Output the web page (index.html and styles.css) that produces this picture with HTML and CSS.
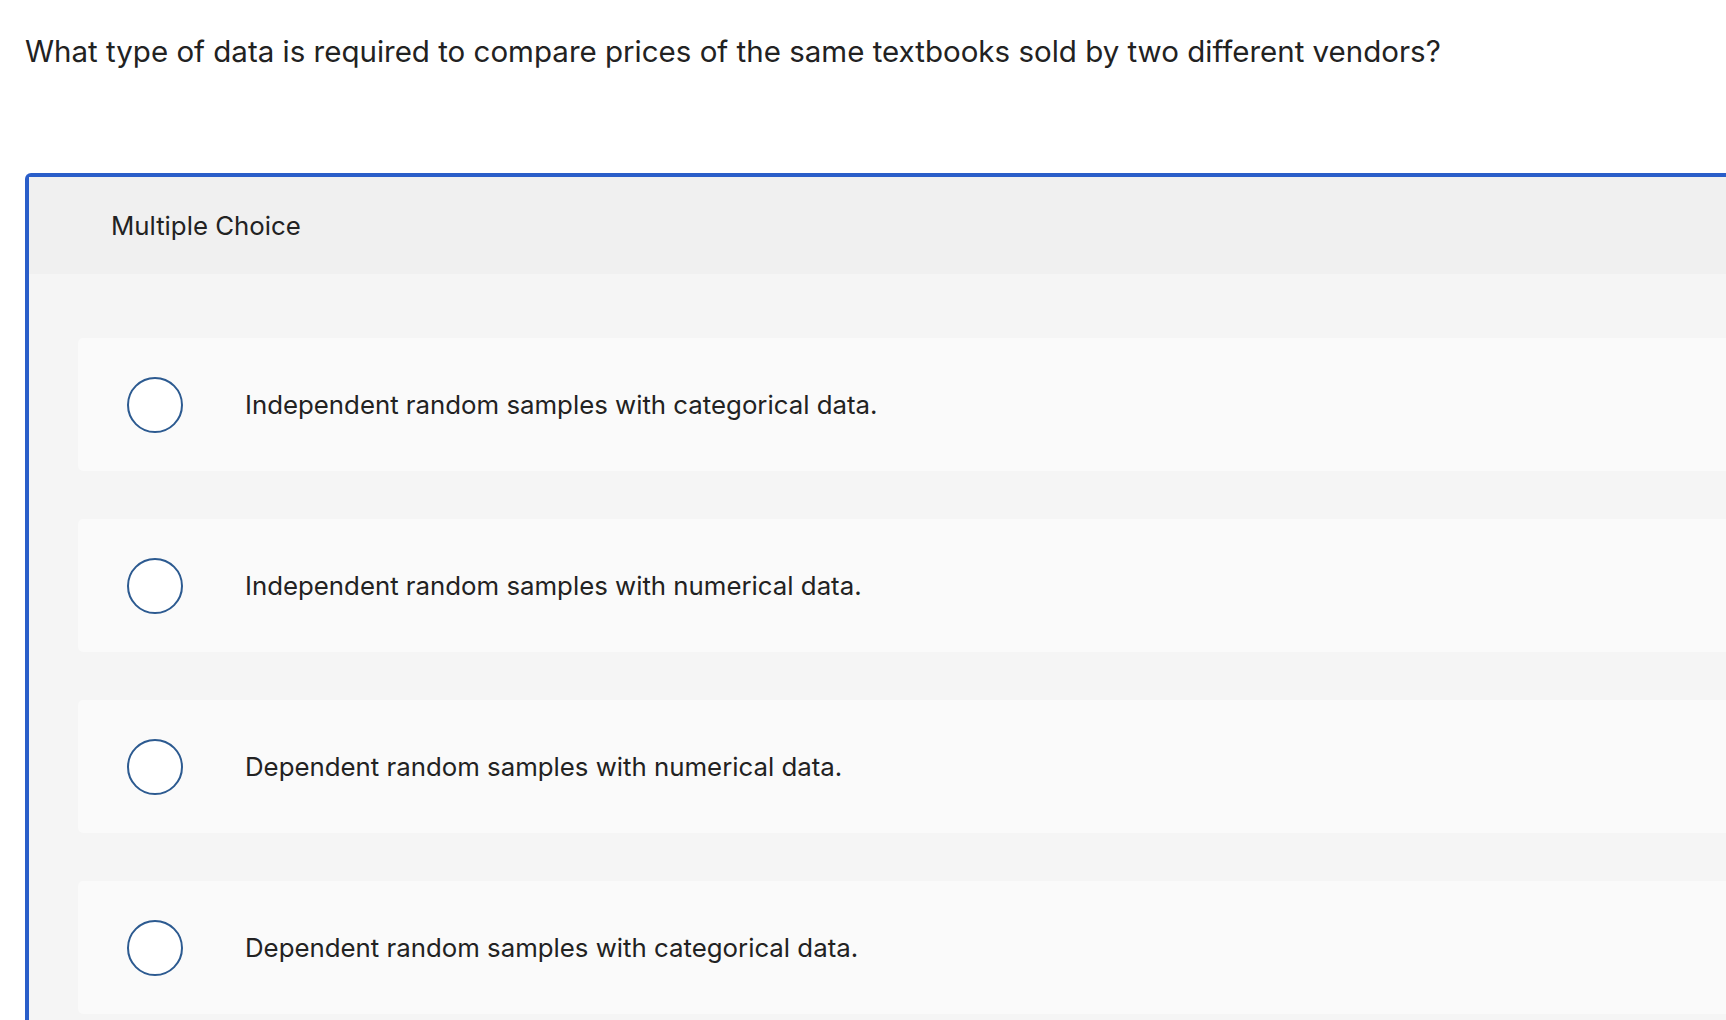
FILE: index.html
```html
<!DOCTYPE html>
<html lang="en">

<head>
    <meta charset="UTF-8">
    <title>Multiple Choice</title>
    <link rel="stylesheet" href="styles.css">
</head>

<body>
    <p class="spoergsmaal">What type of data is required to compare prices of the same textbooks sold by two different vendors?</p>

    <div class="opgave">
        <header>Multiple Choice</header>

        <section>
            <label class="svar">
                <span class="cirkel"></span>
                <span class="tekst">Independent random samples with categorical data.</span>
            </label>
            <label class="svar">
                <span class="cirkel"></span>
                <span class="tekst">Independent random samples with numerical data.</span>
            </label>
            <label class="svar">
                <span class="cirkel"></span>
                <span class="tekst">Dependent random samples with numerical data.</span>
            </label>
            <label class="svar">
                <span class="cirkel"></span>
                <span class="tekst">Dependent random samples with categorical data.</span>
            </label>
        </section>
    </div>
</body></html>
```

FILE: styles.css
```css
html,
body {
    margin: 0;
    overflow: hidden;
    background-color: #fff;
}

body {
    font-family: Inter, "Liberation Sans", sans-serif;
    color: #222;
}

.spoergsmaal {
    margin: 0;
    padding: 33px 0 0 25px;
    font-size: 29.5px;
    line-height: 36px;
}

.opgave {
    margin: 104px -40px 0 25px;
    border-top: 4px solid #2a5ec9;
    border-left: 4px solid #2a5ec9;
    border-right: 4px solid #2a5ec9;
    border-radius: 6px 6px 0 0;
    background-color: #f5f5f5;
}

header {
    height: 97px;
    display: flex;
    align-items: center;
    padding-left: 82px;
    background-color: #f0f0f0;
    font-size: 25.8px;
}

section {
    display: flex;
    flex-direction: column;
    gap: 48px;
    padding: 64px 0 6px 49px;
}

.svar {
    height: 133px;
    display: flex;
    align-items: center;
    padding-left: 49px;
    background-color: #fafafa;
    border-radius: 5px 0 0 5px;
}

.cirkel {
    width: 52px;
    height: 52px;
    flex-shrink: 0;
    border: 2px solid #2c5a90;
    border-radius: 50%;
    background-color: #fff;
}

.tekst {
    margin-left: 62px;
    font-size: 25.8px;
}
```
